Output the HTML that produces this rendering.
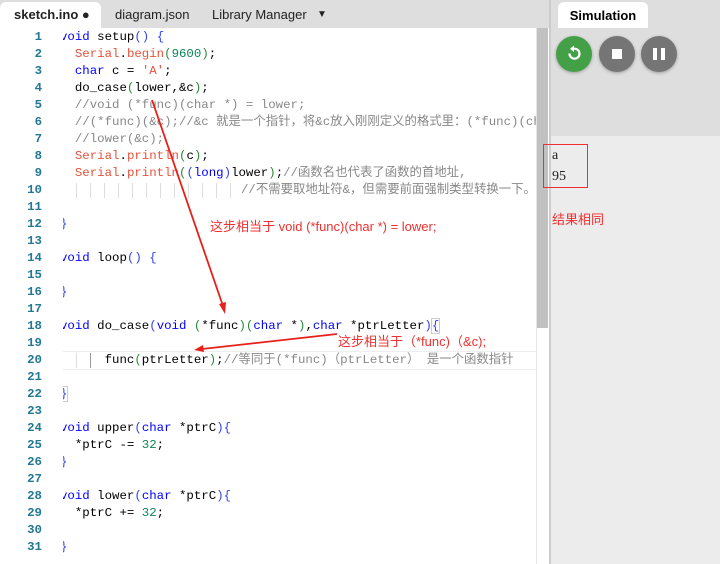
<!DOCTYPE html>
<html><head><meta charset="utf-8"><style>
*{margin:0;padding:0;box-sizing:border-box}
body{width:720px;height:564px;overflow:hidden;background:#fff;font-family:"Liberation Sans","Noto Sans CJK SC",sans-serif;position:relative}
.tabbar{position:absolute;left:0;top:0;width:549px;height:28px;background:#dedede}
.tab{position:absolute;top:0;height:28px;line-height:30px;font-size:13px;color:#222}
.ed{position:absolute;left:0;top:29px;width:536px;height:535px;background:#fff;overflow:hidden}
.ln{position:absolute;left:0;width:42px;text-align:right;font-family:"Liberation Mono",monospace;font-size:12.4px;color:#237893;height:17px;line-height:17px;font-weight:bold}
.cd{position:absolute;left:60px;white-space:pre;font-family:"Liberation Mono","Noto Sans CJK SC",monospace;font-size:12.4px;height:17px;line-height:17px;color:#000}
.clip{position:absolute;left:63px;top:0;width:473px;height:536px;overflow:hidden}
.clip .cd{left:-3px}
.k{color:#0000ff}.s{color:#e5533d}.n{color:#098658}.c{color:#888}.p{color:#2a8a3a}.b{color:#3344ee}
.g{position:absolute;width:1px;height:15px;background:#ddd}
.sb{position:absolute;left:536px;top:28px;width:13px;height:536px;background:#fff;border-left:1px solid #e5e5e5}
.thumb{position:absolute;left:537px;top:28px;width:11px;height:300px;background:#c1c1c1}
.div{position:absolute;left:549px;top:0;width:2px;height:564px;background:#ccc}
.rp{position:absolute;left:551px;top:0;width:169px;height:564px;background:#ececec}
.rtop{position:absolute;left:0;top:0;width:169px;height:136px;background:#dedede}
.btn{position:absolute;top:36px;width:36px;height:36px;border-radius:50%;box-shadow:0 1px 3px rgba(0,0,0,.3)}
.red{color:#f03030;font-size:13px;position:absolute;white-space:nowrap}
</style></head><body>
<div class="tabbar"></div>
<div style="position:absolute;left:0;top:2px;width:101px;height:26px;background:#fff;border-radius:6px 6px 0 0"></div>
<div class="tab" style="left:14px;font-weight:bold">sketch.ino ●</div>
<div class="tab" style="left:115px">diagram.json</div>
<div class="tab" style="left:212px">Library Manager</div>
<div class="tab" style="left:317px;font-size:10px">▼</div>

<div class="ed">
<div class="ln" style="top:0">1</div><div class="ln" style="top:17px">2</div><div class="ln" style="top:34px">3</div><div class="ln" style="top:51px">4</div><div class="ln" style="top:68px">5</div><div class="ln" style="top:85px">6</div><div class="ln" style="top:102px">7</div><div class="ln" style="top:119px">8</div><div class="ln" style="top:136px">9</div><div class="ln" style="top:153px">10</div><div class="ln" style="top:170px">11</div><div class="ln" style="top:187px">12</div><div class="ln" style="top:204px">13</div><div class="ln" style="top:221px">14</div><div class="ln" style="top:238px">15</div><div class="ln" style="top:255px">16</div><div class="ln" style="top:272px">17</div><div class="ln" style="top:289px">18</div><div class="ln" style="top:306px">19</div><div class="ln" style="top:323px">20</div><div class="ln" style="top:340px">21</div><div class="ln" style="top:357px">22</div><div class="ln" style="top:374px">23</div><div class="ln" style="top:391px">24</div><div class="ln" style="top:408px">25</div><div class="ln" style="top:425px">26</div><div class="ln" style="top:442px">27</div><div class="ln" style="top:459px">28</div><div class="ln" style="top:476px">29</div><div class="ln" style="top:493px">30</div><div class="ln" style="top:510px">31</div>
<div class="clip">
<div style="position:absolute;left:0;top:322px;width:473px;height:19px;border-top:1px solid #eee;border-bottom:1px solid #eee"></div>
<div class="cd" style="top:0"><span class="k">void</span> setup<span class="b">()</span> <span class="b">{</span></div>
<div class="cd" style="top:17px">  <span class="s">Serial</span>.<span class="s">begin</span><span class="p">(</span><span class="n">9600</span><span class="p">)</span>;</div>
<div class="cd" style="top:34px">  <span class="k">char</span> c = <span class="s">'A'</span>;</div>
<div class="cd" style="top:51px">  do_case<span class="p">(</span>lower,&amp;c<span class="p">)</span>;</div>
<div class="cd c" style="top:68px">  //void (*func)(char *) = lower;</div>
<div class="cd c" style="top:85px">  //(*func)(&amp;c);//&amp;c 就是一个指针，将&amp;c放入刚刚定义的格式里：(*func)(char *)</div>
<div class="cd c" style="top:102px">  //lower(&amp;c);</div>
<div class="cd" style="top:119px">  <span class="s">Serial</span>.<span class="s">println</span><span class="p">(</span>c<span class="p">)</span>;</div>
<div class="cd" style="top:136px">  <span class="s">Serial</span>.<span class="s">println</span><span class="p">(</span><span class="b">(</span><span class="k">long</span><span class="b">)</span>lower<span class="p">)</span>;<span class="c">//函数名也代表了函数的首地址,</span></div>
<div class="g" style="left:13px;top:154px"></div><div class="g" style="left:27px;top:154px"></div><div class="g" style="left:41px;top:154px"></div><div class="g" style="left:55px;top:154px"></div><div class="g" style="left:69px;top:154px"></div><div class="g" style="left:83px;top:154px"></div><div class="g" style="left:97px;top:154px"></div><div class="g" style="left:111px;top:154px"></div><div class="g" style="left:125px;top:154px"></div><div class="g" style="left:139px;top:154px"></div><div class="g" style="left:153px;top:154px"></div><div class="g" style="left:167px;top:154px"></div>
<div class="cd c" style="top:153px;left:178px">//不需要取地址符&amp;，但需要前面强制类型转换一下。</div>
<div class="cd" style="top:187px"><span class="b">}</span></div>
<div class="cd" style="top:221px"><span class="k">void</span> loop<span class="b">()</span> <span class="b">{</span></div>
<div class="cd" style="top:255px"><span class="b">}</span></div>
<div class="cd" style="top:289px"><span class="k">void</span> do_case<span class="b">(</span><span class="k">void</span> <span class="p">(</span>*func<span class="p">)(</span><span class="k">char</span> *<span class="p">)</span>,<span class="k">char</span> *ptrLetter<span class="b">)</span><span class="b" style="outline:1px solid #ccc">{</span></div>
<div class="g" style="left:13px;top:324px"></div><div class="g" style="left:27px;top:324px;background:#999"></div>
<div class="cd" style="top:323px">      func<span class="p">(</span>ptrLetter<span class="p">)</span>;<span class="c">//等同于(*func)（ptrLetter） 是一个函数指针</span></div>
<div class="cd" style="top:357px"><span class="b" style="outline:1px solid #ccc">}</span></div>
<div class="cd" style="top:391px"><span class="k">void</span> upper<span class="b">(</span><span class="k">char</span> *ptrC<span class="b">){</span></div>
<div class="cd" style="top:408px">  *ptrC -= <span class="n">32</span>;</div>
<div class="cd" style="top:425px"><span class="b">}</span></div>
<div class="cd" style="top:459px"><span class="k">void</span> lower<span class="b">(</span><span class="k">char</span> *ptrC<span class="b">){</span></div>
<div class="cd" style="top:476px">  *ptrC += <span class="n">32</span>;</div>
<div class="cd" style="top:510px"><span class="b">}</span></div>
</div>
</div>
<div class="sb"></div><div class="thumb"></div>
<div class="div"></div>
<div class="rp">
<div class="rtop"></div>
<div style="position:absolute;left:7px;top:2px;width:90px;height:26px;background:#fff;border-radius:6px 6px 0 0;font-weight:bold;font-size:13px;line-height:27px;text-align:center">Simulation</div>
<div class="btn" style="left:5px;background:#44a047"><svg width="36" height="36" viewBox="0 0 36 36"><path d="M13.5 17.5a5 5 0 1 0 4.5-4.8" fill="none" stroke="#fff" stroke-width="2.2"/><path d="M18 9.5v6.5l-4-3.2z" fill="#fff"/></svg></div>
<div class="btn" style="left:48px;background:#757575"><div style="position:absolute;left:13px;top:13px;width:10px;height:10px;background:#fff"></div></div>
<div class="btn" style="left:90px;background:#757575"><div style="position:absolute;left:12px;top:12px;width:4px;height:12px;background:#fff"></div><div style="position:absolute;left:20px;top:12px;width:4px;height:12px;background:#fff"></div></div>
<div style="position:absolute;left:1px;top:145px;font-family:'Liberation Serif',serif;font-size:14px;line-height:21px;color:#222">a<br>95</div>
</div>
<div style="position:absolute;left:543px;top:144px;width:45px;height:44px;border:1.5px solid #f03030"></div>
<div class="red" style="left:552px;top:209px">结果相同</div>
<div class="red" style="left:210px;top:216px">这步相当于 void (*func)(char *) = lower;</div>
<div class="red" style="left:338px;top:331px">这步相当于（*func)（&amp;c);</div>
<svg style="position:absolute;left:0;top:0" width="720" height="564"><g stroke="#e8201a" stroke-width="1.8" fill="#e8201a"><line x1="152" y1="100" x2="223" y2="306"/><path d="M225 314l-6-10 7-2z" stroke="none"/><line x1="337" y1="334" x2="202" y2="349"/><path d="M194 350l9-5 1 7z" stroke="none"/></g></svg>
</body></html>
